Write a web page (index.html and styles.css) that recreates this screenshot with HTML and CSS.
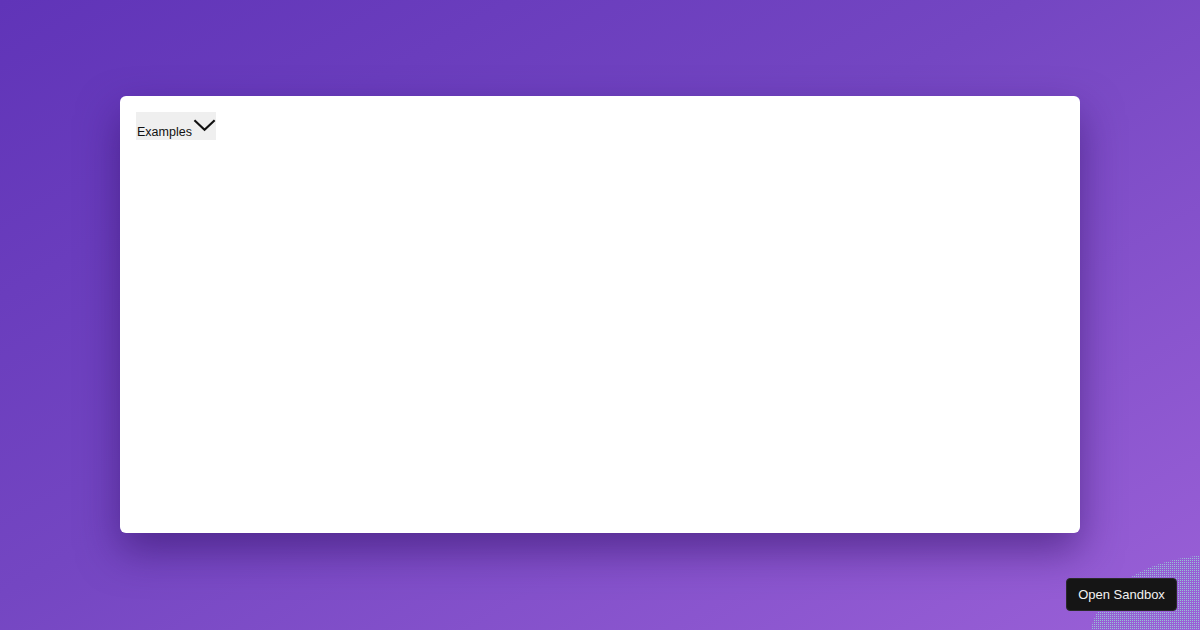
FILE: index.html
```html
<!DOCTYPE html>
<html>
<head>
<meta charset="utf-8">
<link rel="stylesheet" href="styles.css">
</head>
<body>
<div class="stage">
  <div class="card">
    <button class="examples"><span class="label">Examples</span><svg class="chev" width="24" height="24" viewBox="0 0 24 24"><path d="M1.5 6 L12 16 L22.5 6" fill="none" stroke="#111" stroke-width="2.2"/></svg></button>
  </div>
  <svg class="dots" width="130" height="90" viewBox="0 0 130 90">
    <defs>
      <pattern id="dp" width="2" height="2" patternUnits="userSpaceOnUse">
        <rect x="0" y="0" width="1" height="1" fill="#98f0d4"/>
      </pattern>
    </defs>
    <ellipse cx="145" cy="100" rx="125" ry="85" fill="url(#dp)"/>
  </svg>
  <button class="sandbox">Open Sandbox</button>
</div>
</body>
</html>
```
FILE: styles.css
```css
html, body { margin: 0; padding: 0; }
body { width: 1200px; height: 630px; overflow: hidden; font-family: "Liberation Sans", Arial, sans-serif; }
.stage {
  position: relative;
  width: 1200px; height: 630px;
  overflow: hidden;
  background: linear-gradient(150deg, #6034b8 0%, #7446c2 45%, #9a60d7 100%);
  padding-top: 96px;
  box-sizing: border-box;
}
.card {
  margin-left: 120px;
  width: 960px; height: 437px;
  background: #fff;
  border-radius: 6px;
  box-shadow: 0 18px 40px rgba(50, 15, 100, 0.55);
  padding: 16px;
  box-sizing: border-box;
}
.examples {
  display: flex;
  align-items: flex-end;
  width: 80px;
  height: 28px;
  padding: 0 0 2px 1px;
  margin: 0;
  border: none;
  background: #efefef;
  font-family: "Liberation Sans", Arial, sans-serif;
  font-size: 12.5px;
  color: #111;
  line-height: 1;
  box-sizing: border-box;
}
.examples .label { display: block; }
.examples .chev { display: block; align-self: flex-start; margin-top: 2px; margin-left: 1px; }
.dots {
  position: absolute;
  right: 0; bottom: 0;
  opacity: 0.68;
}
.sandbox {
  position: absolute;
  left: 1066px; top: 578px;
  width: 111px; height: 33px;
  background: #151515;
  border: 1px solid #2a2a2a;
  border-radius: 4px;
  color: #f2f2f2;
  font-family: "Liberation Sans", Arial, sans-serif;
  font-size: 13px;
  padding: 0;
}
```
